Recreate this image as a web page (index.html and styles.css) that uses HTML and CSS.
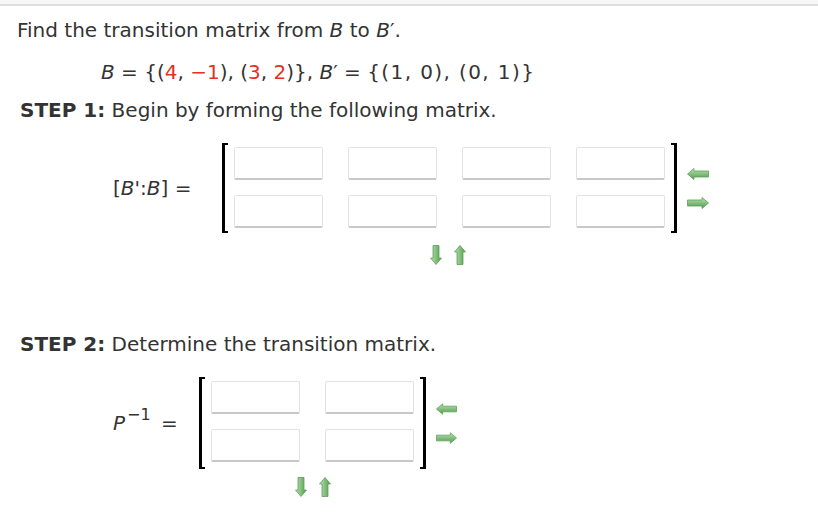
FILE: index.html
```html
<!DOCTYPE html>
<html>
<head>
<meta charset="utf-8">
<link rel="stylesheet" href="styles.css">
</head>
<body>
<div class="topbar"></div>
<div class="page">
  <p class="question">Find the transition matrix from <i>B</i> to <i>B</i>′.</p>
  <p class="sets"><i>B</i> = {(<span class="red">4</span>, <span class="red">−1</span>), (<span class="red">3</span>, <span class="red">2</span>)}, <i>B</i>′ = <span class="wide">{(1, 0), (0, 1)</span>}</p>
  <p class="step"><b>STEP 1:</b> Begin by forming the following matrix.</p>

  <div class="mrow m1">
    <div class="label label-wide">[<i>B</i>':<i>B</i>] =</div>
    <div class="matrix">
      <div class="brk brk-l"></div>
      <div class="cells cells-4">
        <div class="cell"></div><div class="cell"></div><div class="cell"></div><div class="cell"></div>
        <div class="cell"></div><div class="cell"></div><div class="cell"></div><div class="cell"></div>
      </div>
      <div class="brk brk-r"></div>
      <div class="side">
        <svg class="harrow" width="22" height="12" viewBox="0 0 22 12"><defs><linearGradient id="g1" x1="0" y1="0" x2="0" y2="1"><stop offset="0" stop-color="#b9e2b1"/><stop offset="1" stop-color="#4f9c4b"/></linearGradient></defs><path d="M0.5 6 L7 0.5 L7 3 L21.5 3 L21.5 9 L7 9 L7 11.5 Z" fill="url(#g1)" stroke="#5e9e58" stroke-width="0.8"/></svg>
        <svg class="harrow" width="22" height="12" viewBox="0 0 22 12"><defs><linearGradient id="g2" x1="0" y1="0" x2="0" y2="1"><stop offset="0" stop-color="#b9e2b1"/><stop offset="1" stop-color="#4f9c4b"/></linearGradient></defs><path d="M21.5 6 L15 0.5 L15 3 L0.5 3 L0.5 9 L15 9 L15 11.5 Z" fill="url(#g2)" stroke="#5e9e58" stroke-width="0.8"/></svg>
      </div>
    </div>
  </div>
  <div class="varrows va1">
    <svg width="12" height="20" viewBox="0 0 12 20"><defs><linearGradient id="g3" x1="0" y1="0" x2="1" y2="0"><stop offset="0" stop-color="#b9e2b1"/><stop offset="1" stop-color="#4f9c4b"/></linearGradient></defs><path d="M6 19.5 L0.5 13 L3 13 L3 0.5 L9 0.5 L9 13 L11.5 13 Z" fill="url(#g3)" stroke="#5e9e58" stroke-width="0.8"/></svg>
    <svg width="12" height="20" viewBox="0 0 12 20"><defs><linearGradient id="g4" x1="0" y1="0" x2="1" y2="0"><stop offset="0" stop-color="#b9e2b1"/><stop offset="1" stop-color="#4f9c4b"/></linearGradient></defs><path d="M6 0.5 L0.5 7 L3 7 L3 19.5 L9 19.5 L9 7 L11.5 7 Z" fill="url(#g4)" stroke="#5e9e58" stroke-width="0.8"/></svg>
  </div>

  <p class="step step2"><b>STEP 2:</b> Determine the transition matrix.</p>

  <div class="mrow m2">
    <div class="label label-narrow"><i>P</i><sup>−1</sup> =</div>
    <div class="matrix">
      <div class="brk brk-l"></div>
      <div class="cells cells-2">
        <div class="cell"></div><div class="cell"></div>
        <div class="cell"></div><div class="cell"></div>
      </div>
      <div class="brk brk-r"></div>
      <div class="side">
        <svg class="harrow" width="21" height="12" viewBox="0 0 22 12"><defs><linearGradient id="g5" x1="0" y1="0" x2="0" y2="1"><stop offset="0" stop-color="#b9e2b1"/><stop offset="1" stop-color="#4f9c4b"/></linearGradient></defs><path d="M0.5 6 L7 0.5 L7 3 L21.5 3 L21.5 9 L7 9 L7 11.5 Z" fill="url(#g5)" stroke="#5e9e58" stroke-width="0.8"/></svg>
        <svg class="harrow" width="21" height="12" viewBox="0 0 22 12"><defs><linearGradient id="g6" x1="0" y1="0" x2="0" y2="1"><stop offset="0" stop-color="#b9e2b1"/><stop offset="1" stop-color="#4f9c4b"/></linearGradient></defs><path d="M21.5 6 L15 0.5 L15 3 L0.5 3 L0.5 9 L15 9 L15 11.5 Z" fill="url(#g6)" stroke="#5e9e58" stroke-width="0.8"/></svg>
      </div>
    </div>
  </div>
  <div class="varrows va2">
    <svg width="12" height="20" viewBox="0 0 12 20"><defs><linearGradient id="g7" x1="0" y1="0" x2="1" y2="0"><stop offset="0" stop-color="#b9e2b1"/><stop offset="1" stop-color="#4f9c4b"/></linearGradient></defs><path d="M6 19.5 L0.5 13 L3 13 L3 0.5 L9 0.5 L9 13 L11.5 13 Z" fill="url(#g7)" stroke="#5e9e58" stroke-width="0.8"/></svg>
    <svg width="12" height="20" viewBox="0 0 12 20"><defs><linearGradient id="g8" x1="0" y1="0" x2="1" y2="0"><stop offset="0" stop-color="#b9e2b1"/><stop offset="1" stop-color="#4f9c4b"/></linearGradient></defs><path d="M6 0.5 L0.5 7 L3 7 L3 19.5 L9 19.5 L9 7 L11.5 7 Z" fill="url(#g8)" stroke="#5e9e58" stroke-width="0.8"/></svg>
  </div>
</div>
</body>
</html>
```

FILE: styles.css
```css
html, body {
  margin: 0;
  padding: 0;
  background: #fff;
}
body {
  font-family: "DejaVu Sans", Verdana, sans-serif;
  font-size: 20px;
  line-height: 24px;
  color: #333;
}
.topbar {
  height: 4px;
  background: #f6f6f6;
  border-bottom: 2px solid #dedede;
}
.page {
  padding-top: 12px;
}
p {
  margin: 0;
}
.question {
  padding-left: 17px;
}
.sets {
  margin-top: 18px;
  padding-left: 101px;
}
.wide {
  letter-spacing: 1.4px;
}
.red {
  color: #e3321f;
}
.step {
  margin-top: 14px;
  padding-left: 20px;
}
.step b {
  color: #333;
}
.step2 {
  margin-top: 67px;
}
.mrow {
  display: flex;
  align-items: center;
  padding-left: 113px;
}
.m1 {
  margin-top: 21px;
}
.m2 {
  margin-top: 21px;
}
.label {
  flex: none;
}
.label-wide {
  width: 109px;
}
.label-narrow {
  width: 86px;
}
.label sup {
  font-size: 16px;
  line-height: 0;
  position: relative;
  top: -2px;
  margin-left: 2px;
  margin-right: 4px;
}
.matrix {
  display: flex;
  align-items: stretch;
}
.brk {
  width: 3px;
  border-top: 2px solid #000;
  border-bottom: 2px solid #000;
}
.brk-l {
  border-left: 3px solid #000;
}
.brk-r {
  border-right: 3px solid #000;
}
.cells {
  display: grid;
  grid-template-columns: repeat(4, 89px);
  column-gap: 25px;
  row-gap: 15px;
  padding: 4px 6px 5px 6px;
}
.cells-2 {
  grid-template-columns: repeat(2, 89px);
  padding-bottom: 7px;
}
.cell {
  height: 30px;
  border: 1px solid #e3e3e3;
  border-bottom: 2px solid #c8c8c8;
  border-radius: 2px;
  background: #fff;
  box-sizing: content-box;
  width: 87px;
}
.side {
  display: flex;
  flex-direction: column;
  justify-content: center;
  gap: 17px;
  margin-left: 10px;
}
.harrow {
  display: block;
}
.varrows {
  display: flex;
  gap: 12px;
}
.varrows svg {
  display: block;
}
.va1 {
  margin-top: 12px;
  padding-left: 430px;
}
.va2 {
  margin-top: 8px;
  padding-left: 295px;
}
```
